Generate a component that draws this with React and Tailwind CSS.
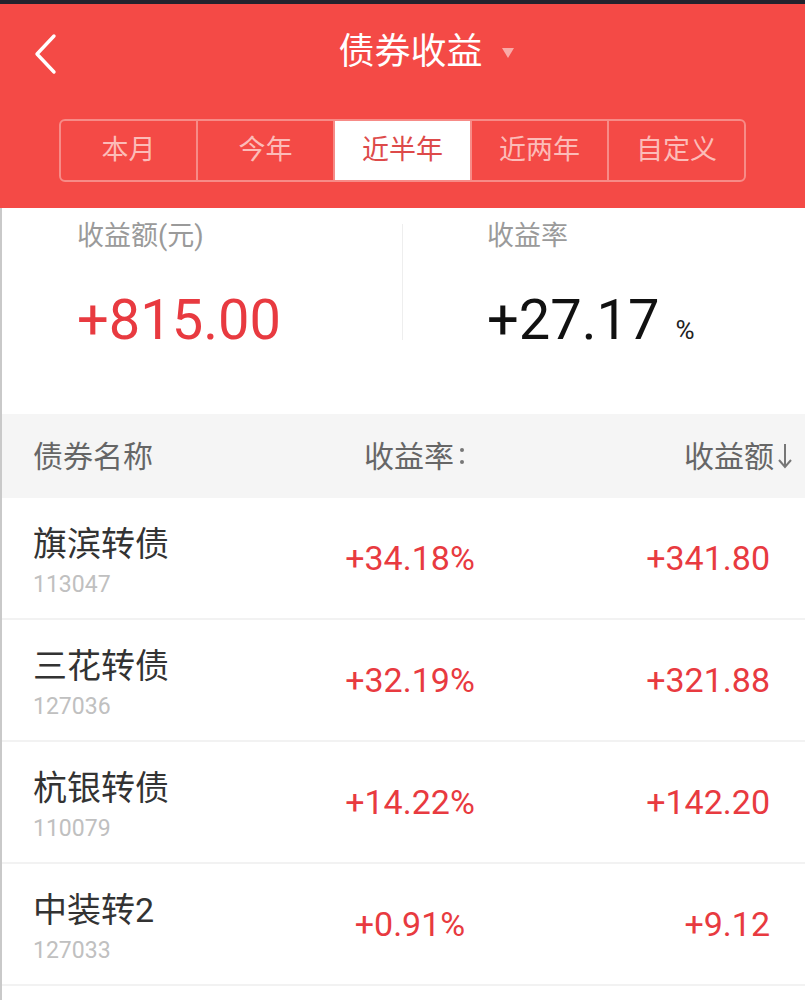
import React, { useState } from 'react';

const TABS = ['本月', '今年', '近半年', '近两年', '自定义'];

const BONDS = [
  { name: '旗滨转债', code: '113047', rate: '+34.18%', amount: '+341.80' },
  { name: '三花转债', code: '127036', rate: '+32.19%', amount: '+321.88' },
  { name: '杭银转债', code: '110079', rate: '+14.22%', amount: '+142.20' },
  { name: '中装转2', code: '127033', rate: '+0.91%', amount: '+9.12' },
];

const FONT = { fontFamily: 'Roboto, "Noto Sans CJK SC", sans-serif' };

export default function App() {
  const [active, setActive] = useState(2);

  return (
    <div className="w-[805px] h-[1000px] bg-white overflow-hidden" style={FONT}>
      <div className="h-[4px] bg-[#23232d]" />

      {/* Red header */}
      <header className="bg-[#f44a46] pb-[26px]">
        <div className="relative h-[96px] flex items-center justify-center">
          <button className="absolute left-[30px] top-[26px] w-[30px] h-[48px] flex items-center justify-center">
            <svg width="26" height="42" viewBox="0 0 26 42" fill="none">
              <path d="M22 3 L5 21 L22 39" stroke="white" strokeWidth="3.4" strokeLinecap="round" strokeLinejoin="round" />
            </svg>
          </button>
          <div className="relative pl-[16px] flex items-center">
            <span className="text-[36px] leading-none text-white">债券收益</span>
            <svg className="absolute left-[180px] top-[14px]" width="12" height="10" viewBox="0 0 12 10">
              <path d="M0 0 H12 L6 10 Z" fill="#f9aaa7" />
            </svg>
          </div>
        </div>
        <div className="mx-[59px] mt-[19px] h-[63px] flex rounded-[6px] border-2 border-[#f78b87] overflow-hidden">
          {TABS.map((t, i) => (
            <button
              key={t}
              onClick={() => setActive(i)}
              className={`flex-1 flex items-center justify-center text-[27px] ${i > 0 ? 'border-l-2 border-[#f78b87]' : ''} ${
                active === i ? 'bg-white text-[#dd4a4a]' : 'text-[#fcbcb8]'
              }`}
            >
              {t}
            </button>
          ))}
        </div>
      </header>

      <div className="border-l-2 border-[#c9c9c9] h-full">
        {/* Summary */}
        <section className="h-[206px] flex">
          <div className="w-[400px] pl-[75px] pt-[12px]">
            <div className="text-[27px] leading-[32px] text-[#9a9a9a]">收益额(元)</div>
            <div className="mt-[40px] text-[56px] leading-none text-[#e83a40]">+815.00</div>
          </div>
          <div className="w-px h-[116px] mt-[16px] bg-[#eeeeee]" />
          <div className="flex-1 pl-[84px] pt-[12px]">
            <div className="text-[27px] leading-[32px] text-[#9a9a9a]">收益率</div>
            <div className="mt-[40px] flex items-baseline leading-none">
              <span className="text-[56px] text-[#111111]">+27.17</span>
              <span className="ml-[16px] text-[26px] text-[#222222]">%</span>
            </div>
          </div>
        </section>

        {/* Table header */}
        <div className="h-[84px] bg-[#f5f5f5] flex items-center pl-[31px] text-[30px] text-[#666666]">
          <div className="w-[250px]">债券名称</div>
          <div className="w-[181px] flex justify-end items-center">
            收益率
            <span className="ml-[6px] flex flex-col gap-[8px]">
              <span className="block w-[4px] h-[4px] rounded-full bg-[#777777]" />
              <span className="block w-[4px] h-[4px] rounded-full bg-[#777777]" />
            </span>
          </div>
          <div className="flex-1 pr-[12px] flex justify-end items-center">
            收益额
            <svg className="ml-[3px]" width="16" height="30" viewBox="0 0 16 30" fill="none">
              <path d="M8 3 V26 M2 19 L8 26 L14 19" stroke="#777777" strokeWidth="2" />
            </svg>
          </div>
        </div>

        {/* Rows */}
        {BONDS.map((b) => (
          <div key={b.code} className="h-[122px] flex items-center pl-[31px] border-b-2 border-[#f2f2f2]">
            <div className="w-[250px] flex flex-col">
              <div className="text-[34px] leading-[40px] text-[#333333] mt-[6px]">{b.name}</div>
              <div className="text-[23px] leading-[28px] mt-[7px] text-[#c0c0c0]">{b.code}</div>
            </div>
            <div className="w-[254px] text-center text-[34px] text-[#e83a40]">{b.rate}</div>
            <div className="flex-1 text-right pr-[35px] text-[34px] text-[#e83a40]">{b.amount}</div>
          </div>
        ))}
      </div>
    </div>
  );
}
